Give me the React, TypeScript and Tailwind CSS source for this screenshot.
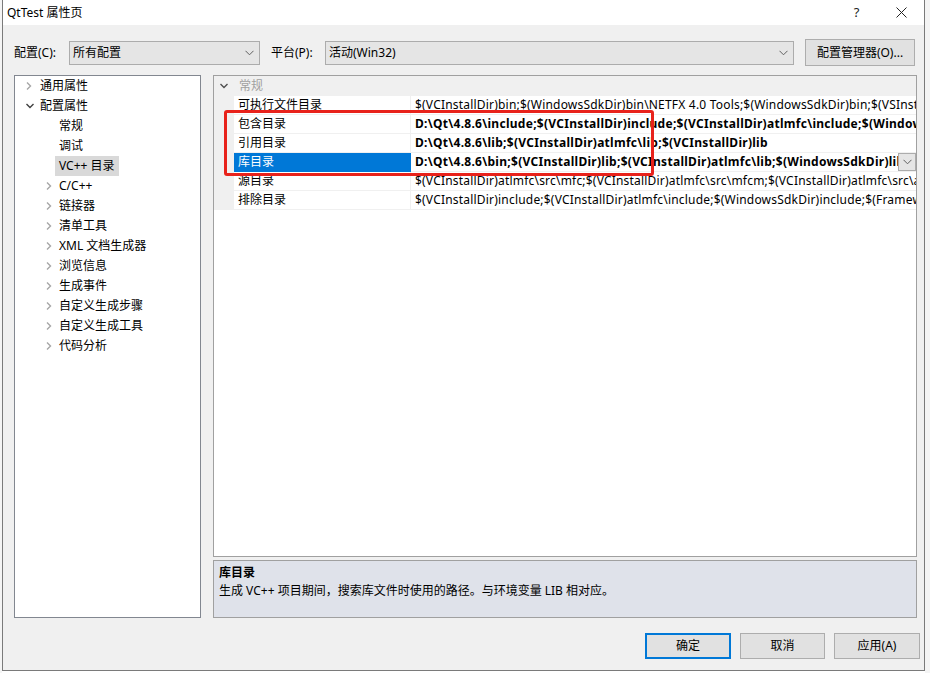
import React from "react";

function ChevRight({ color = "#a6a6a6" }: { color?: string }) {
  return (
    <svg width="8" height="10" viewBox="0 0 8 10">
      <path d="M2 1.5 L5.5 5 L2 8.5" fill="none" stroke={color} strokeWidth="1.4" />
    </svg>
  );
}

function ChevDown({ color = "#404040", w = 10 }: { color?: string; w?: number }) {
  return (
    <svg width={w} height="8" viewBox="0 0 10 8">
      <path d="M1.5 2 L5 5.5 L8.5 2" fill="none" stroke={color} strokeWidth="1.4" />
    </svg>
  );
}

function SmallChev() {
  return (
    <svg width="9" height="6" viewBox="0 0 9 6">
      <path d="M0.5 0.8 L4.5 4.8 L8.5 0.8" fill="none" stroke="#606060" strokeWidth="1" />
    </svg>
  );
}

type TreeItem = { label: string; level: 1 | 2; kind: "closed" | "open" | "leaf"; selected?: boolean };

const tree: TreeItem[] = [
  { label: "通用属性", level: 1, kind: "closed" },
  { label: "配置属性", level: 1, kind: "open" },
  { label: "常规", level: 2, kind: "leaf" },
  { label: "调试", level: 2, kind: "leaf" },
  { label: "VC++ 目录", level: 2, kind: "leaf", selected: true },
  { label: "C/C++", level: 2, kind: "closed" },
  { label: "链接器", level: 2, kind: "closed" },
  { label: "清单工具", level: 2, kind: "closed" },
  { label: "XML 文档生成器", level: 2, kind: "closed" },
  { label: "浏览信息", level: 2, kind: "closed" },
  { label: "生成事件", level: 2, kind: "closed" },
  { label: "自定义生成步骤", level: 2, kind: "closed" },
  { label: "自定义生成工具", level: 2, kind: "closed" },
  { label: "代码分析", level: 2, kind: "closed" },
];

type Prop = { name: string; value: string; bold?: boolean; selected?: boolean };

const props: Prop[] = [
  {
    name: "可执行文件目录",
    value: "$(VCInstallDir)bin;$(WindowsSdkDir)bin\\NETFX 4.0 Tools;$(WindowsSdkDir)bin;$(VSInstallDir)Common7\\Tools\\bin;$(VSInstallDir)Common7\\tools;$(VSInstallDir)Common7\\ide;$(ProgramFiles)\\HTML Help Workshop;",
  },
  {
    name: "包含目录",
    value: "D:\\Qt\\4.8.6\\include;$(VCInstallDir)include;$(VCInstallDir)atlmfc\\include;$(WindowsSdkDir)include;$(FrameworkSDKDir)\\include;",
    bold: true,
  },
  { name: "引用目录", value: "D:\\Qt\\4.8.6\\lib;$(VCInstallDir)atlmfc\\lib;$(VCInstallDir)lib", bold: true },
  {
    name: "库目录",
    value: "D:\\Qt\\4.8.6\\bin;$(VCInstallDir)lib;$(VCInstallDir)atlmfc\\lib;$(WindowsSdkDir)lib;$(FrameworkSDKDir)\\lib",
    bold: true,
    selected: true,
  },
  {
    name: "源目录",
    value: "$(VCInstallDir)atlmfc\\src\\mfc;$(VCInstallDir)atlmfc\\src\\mfcm;$(VCInstallDir)atlmfc\\src\\atl;$(VCInstallDir)crt\\src;",
  },
  {
    name: "排除目录",
    value: "$(VCInstallDir)include;$(VCInstallDir)atlmfc\\include;$(WindowsSdkDir)include;$(FrameworkSDKDir)\\include;$(MSBuildToolsPath32);",
  },
];

export default function App() {
  return (
    <div className="w-[930px] h-[673px] bg-white flex overflow-hidden font-['Noto_Sans','Noto_Sans_CJK_SC',sans-serif] text-[12px] text-black leading-none">
      <div className="w-[2px] shrink-0 bg-[#f4f4f4]" />
      <div className="w-[923px] h-[671px] shrink-0 flex flex-col border-l border-r border-b border-[#7a7a7a]">
        {/* Title bar */}
        <div className="h-[25px] bg-white flex items-center shrink-0">
          <div className="pl-[4px] flex-1">QtTest 属性页</div>
          <div className="w-[45px] h-full flex items-center justify-center text-[13px] text-[#222]">?</div>
          <div className="w-[45px] h-full flex items-center justify-center">
            <svg width="11" height="11" viewBox="0 0 11 11">
              <path d="M0.5 0.5 L10.5 10.5 M10.5 0.5 L0.5 10.5" stroke="#222" strokeWidth="1" />
            </svg>
          </div>
        </div>

        {/* Body */}
        <div className="flex-1 bg-[#f0f0f0] flex flex-col pl-[11px] pt-[14px]">
          {/* Config row */}
          <div className="h-[27px] flex items-center">
            <div className="w-[55px]">配置(C):</div>
            <div className="w-[191px] h-[24px] bg-[#e5e5e5] border border-[#acacac] flex items-center pl-[3px] pr-[5px]">
              <span className="flex-1">所有配置</span>
              <SmallChev />
            </div>
            <div className="w-[54px] ml-[11px]">平台(P):</div>
            <div className="w-[469px] h-[24px] bg-[#e5e5e5] border border-[#acacac] flex items-center pl-[3px] pr-[5px]">
              <span className="flex-1">活动(Win32)</span>
              <SmallChev />
            </div>
            <div className="w-[110px] h-[27px] ml-[11px] bg-[#e1e1e1] border border-[#adadad] flex items-center justify-center">
              配置管理器(O)...
            </div>
          </div>

          {/* Main */}
          <div className="mt-[9px] h-[543px] flex">
            {/* Tree */}
            <div className="w-[187px] h-full bg-white border border-[#828790]">
              {tree.map((t, i) => (
                <div key={i} className="h-[20px] flex items-center">
                  <div
                    className={
                      t.level === 1
                        ? "w-[21px] pl-[10px] flex items-center"
                        : "w-[40px] pl-[30px] flex items-center"
                    }
                  >
                    {t.kind === "closed" && <ChevRight />}
                    {t.kind === "open" && <ChevDown color="#404040" />}
                  </div>
                  <div
                    className={
                      t.selected
                        ? "h-[20px] flex items-center px-[4px] bg-[#d9d9d9]"
                        : "h-[20px] flex items-center px-[4px]"
                    }
                  >
                    {t.label}
                  </div>
                </div>
              ))}
            </div>

            {/* Right panel */}
            <div className="w-[704px] ml-[12px] h-full flex flex-col">
              <div className="relative h-[482px] bg-white border border-[#a0a0a0] flex flex-col">
                <div className="h-[20px] bg-[#f0f0f0] flex items-center">
                  <div className="w-[25px] pl-[5px] flex items-center">
                    <ChevDown color="#505050" />
                  </div>
                  <div className="text-[#a0a0a0]">常规</div>
                </div>
                {props.map((p, i) => (
                  <div key={i} className="h-[19px] flex">
                    <div className="w-[20px] bg-[#f0f0f0] shrink-0" />
                    <div
                      className={
                        p.selected
                          ? "w-[177px] shrink-0 bg-[#0078d7] text-white flex items-center pl-[4px] border-b border-[#0078d7]"
                          : "w-[177px] shrink-0 flex items-center pl-[4px] border-b border-r border-[#f0f0f0]"
                      }
                    >
                      {p.name}
                    </div>
                    <div className="flex-1 min-w-0 flex items-center border-b border-[#f0f0f0] pl-[4px]">
                      <div
                        className={
                          p.bold
                            ? "flex-1 min-w-0 overflow-hidden whitespace-nowrap font-bold tracking-[0.28px]"
                            : "flex-1 min-w-0 overflow-hidden whitespace-nowrap tracking-[0.2px]"
                        }
                      >
                        {p.value}
                      </div>
                      {p.selected && (
                        <div className="w-[18px] h-[18px] shrink-0 bg-[#e5e5e5] border border-[#acacac] flex items-center justify-center">
                          <SmallChev />
                        </div>
                      )}
                    </div>
                  </div>
                ))}
                {/* Annotation */}
                <div className="absolute left-[10px] top-[34px] w-[430px] h-[66px] border-[3px] border-[#e8221b] rounded-[3px]" />
              </div>
              <div className="mt-[3px] h-[58px] bg-[#dfe2ea] border border-[#a0a0a0] pl-[5px] pt-[3px]">
                <div className="h-[18px] flex items-center font-bold">库目录</div>
                <div className="h-[18px] flex items-center">
                  生成 VC++ 项目期间，搜索库文件时使用的路径。与环境变量 LIB 相对应。
                </div>
              </div>
            </div>
          </div>

          {/* Buttons */}
          <div className="mt-[15px] flex justify-end pr-[4px]">
            <div className="w-[86px] h-[26px] bg-[#e1e1e1] border-2 border-[#0078d7] flex items-center justify-center">
              确定
            </div>
            <div className="w-[85px] h-[26px] ml-[9px] bg-[#e1e1e1] border border-[#adadad] flex items-center justify-center">
              取消
            </div>
            <div className="w-[86px] h-[26px] ml-[9px] bg-[#e1e1e1] border border-[#adadad] flex items-center justify-center">
              应用(A)
            </div>
          </div>
        </div>
      </div>
      <div className="flex-1 bg-[#f4f4f4]" />
    </div>
  );
}
